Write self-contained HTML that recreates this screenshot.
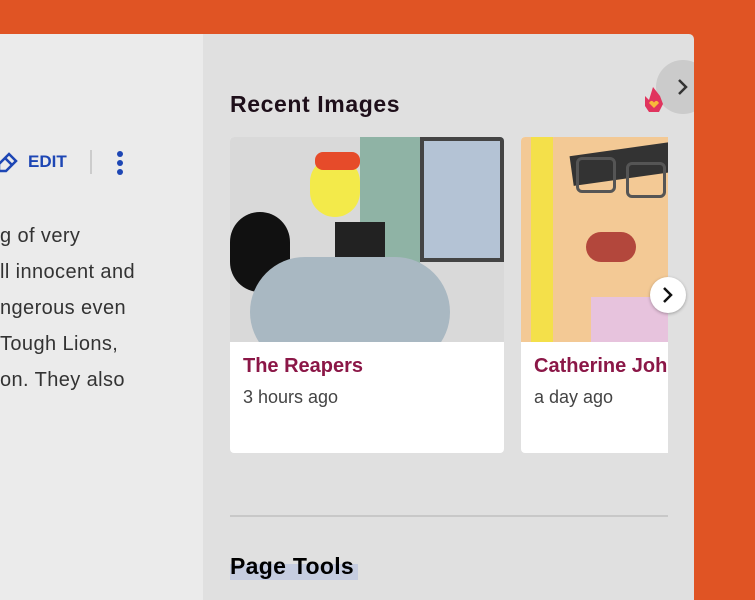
<!DOCTYPE html>
<html><head><style>
*{margin:0;padding:0;box-sizing:border-box}
body{width:755px;height:600px;background:#e05424;position:relative;overflow:hidden;font-family:"Liberation Sans",sans-serif}
.panel{position:absolute;left:0;top:34px;width:694px;height:566px;background:#e0e0e0;border-radius:0 5px 0 0;overflow:hidden}
.left{position:absolute;left:0;top:0;width:203px;height:566px;background:#ebebeb}
.txt{position:absolute;left:0;font-size:20px;letter-spacing:0.4px;color:#333;line-height:36px;top:184px;white-space:nowrap}
.t{position:absolute;font-weight:bold;color:#1e0f1a}
.card{position:absolute;top:103px;width:274px;height:316px;background:#fff;border-radius:4px;overflow:hidden}
.img{height:205px;position:relative;overflow:hidden}
.name{position:absolute;left:13px;top:218px;font-size:20px;font-weight:bold;color:#8b1747;white-space:nowrap}
.time{position:absolute;left:13px;top:250px;font-size:18px;color:#444;white-space:nowrap}
</style></head><body>
<div class="panel">
<div class="left">
<svg style="position:absolute;left:-4px;top:116px" width="24" height="24" viewBox="0 0 24 24"><path d="M3 14 L13 4 L20 11 L10 21 L3 21Z M9 8 L16 15" fill="none" stroke="#1d46b4" stroke-width="2.5"/></svg>
<div style="position:absolute;left:28px;top:118px;font-size:17px;font-weight:bold;color:#1d46b4">EDIT</div>
<div style="position:absolute;left:90px;top:116px;width:2px;height:24px;background:#ccc"></div>
<div style="position:absolute;left:117px;top:117px;width:6px">
<div style="width:6px;height:6px;border-radius:3px;background:#1d46b4;margin-bottom:3px"></div>
<div style="width:6px;height:6px;border-radius:3px;background:#1d46b4;margin-bottom:3px"></div>
<div style="width:6px;height:6px;border-radius:3px;background:#1d46b4"></div></div>
<div class="txt">g of very<br>ll innocent and<br>ngerous even<br>Tough Lions,<br>on. They also</div>
</div>
<div class="t" style="left:230px;top:57px;font-size:23px;letter-spacing:0.6px">Recent Images</div>
<div style="position:absolute;left:656px;top:26px;width:54px;height:54px;border-radius:27px;background:#cbcbcb"></div>
<svg style="position:absolute;left:676px;top:43px" width="14" height="20"><path d="M3 3 L10 10 L3 17" fill="none" stroke="#333" stroke-width="2.5"/></svg>
<svg style="position:absolute;left:643px;top:51px" width="22" height="28" viewBox="0 0 22 28"><path d="M10 2 L17 11 L20 19 L16 27 L6 27 L2 21 L2 11 L6 15Z" fill="#e0345e"/><path d="M6 18 Q8.5 14 11 17.5 Q13.5 14 16 18 L11 23Z" fill="#f7b93a"/></svg>
<div class="card" style="left:230px">
<div class="img" style="background:#d9d9d9">
<div style="position:absolute;left:130px;top:0;width:60px;height:130px;background:#8fb3a5"></div>
<div style="position:absolute;left:190px;top:0;width:84px;height:125px;background:#b4c3d5;border:4px solid #444"></div>
<div style="position:absolute;left:80px;top:20px;width:50px;height:60px;border-radius:25px;background:#f3ea4a"></div>
<div style="position:absolute;left:85px;top:15px;width:45px;height:18px;background:#e64b2a;border-radius:8px"></div>
<div style="position:absolute;left:105px;top:85px;width:50px;height:50px;background:#222"></div>
<div style="position:absolute;left:0;top:75px;width:60px;height:80px;border-radius:30px;background:#111"></div>
<div style="position:absolute;left:20px;top:120px;width:200px;height:110px;border-radius:60px;background:#a9b8c2"></div>
</div>
<div class="name">The Reapers</div><div class="time">3 hours ago</div>
</div>
<div class="card" style="left:521px;width:147px;border-radius:4px 0 0 4px">
<div class="img" style="background:#f3c995">
<div style="position:absolute;left:10px;top:0;width:22px;height:205px;background:#f4e04a"></div>
<div style="position:absolute;left:50px;top:10px;width:130px;height:30px;background:#333;transform:rotate(-8deg)"></div>
<div style="position:absolute;left:55px;top:20px;width:40px;height:36px;border:3px solid #555;border-radius:6px"></div>
<div style="position:absolute;left:105px;top:25px;width:40px;height:36px;border:3px solid #555;border-radius:6px"></div>
<div style="position:absolute;left:65px;top:95px;width:50px;height:30px;border-radius:15px;background:#b3473c"></div>
<div style="position:absolute;left:70px;top:160px;width:100px;height:50px;background:#e7c3dd"></div>
</div>
<div class="name">Catherine Joh</div><div class="time">a day ago</div>
</div>
<div style="position:absolute;left:650px;top:243px;width:36px;height:36px;border-radius:18px;background:#fff;box-shadow:0 1px 3px rgba(0,0,0,.3)"></div>
<svg style="position:absolute;left:660px;top:251px" width="16" height="20"><path d="M4 3 L11 10 L4 17" fill="none" stroke="#111" stroke-width="2.5"/></svg>
<div style="position:absolute;left:230px;top:481px;width:438px;height:2px;background:#c8c8c8"></div>
<div style="position:absolute;left:230px;top:530px;width:128px;height:16px;background:#c6cde0"></div>
<div class="t" style="left:230px;top:519px;font-size:23px;letter-spacing:0.3px;color:#000">Page Tools</div>
</div>
</body></html>
